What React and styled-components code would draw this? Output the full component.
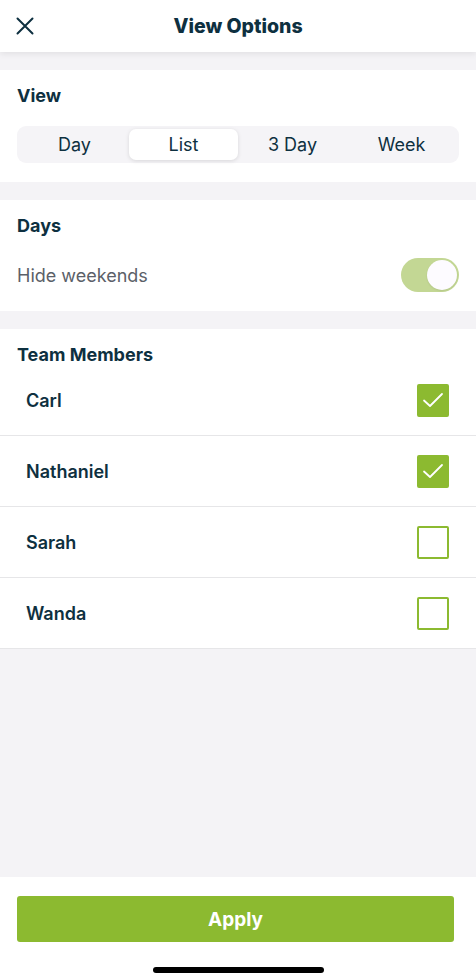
import React, { useState } from 'react';
import styled, { createGlobalStyle } from 'styled-components';

const GlobalStyle = createGlobalStyle`
    * { box-sizing: border-box; }
    html, body {
        margin: 0;
        padding: 0;
        background: #f4f3f6;
        font-family: Inter, "Noto Sans", sans-serif;
        color: #0e3040;
    }
`;

const Page = styled.div`
    width: 476px;
    height: 980px;
    display: flex;
    flex-direction: column;
    background: #f4f3f6;
`;

const Header = styled.header`
    height: 52px;
    background: #fff;
    display: grid;
    grid-template-columns: 52px 1fr 52px;
    align-items: center;
    box-shadow: 0 2px 6px rgba(0, 0, 0, 0.08);
    position: relative;
    z-index: 1;
`;

const CloseButton = styled.button`
    border: 0;
    background: none;
    padding: 0 0 0 16px;
    height: 52px;
    display: flex;
    align-items: center;
    cursor: pointer;
`;

const Title = styled.h1`
    margin: 0;
    text-align: center;
    font-size: 19.5px;
    font-weight: 800;
    color: #0e3040;
`;

const Body = styled.main`
    flex: 1;
    display: flex;
    flex-direction: column;
    gap: 18px;
    padding-top: 18px;
`;

const Section = styled.section`
    background: #fff;
    padding: ${p => p.$padding || '16px 17px 19px'};
`;

const SectionTitle = styled.h2`
    margin: 0;
    padding-left: ${p => p.$inset || 0}px;
    font-size: 18px;
    font-weight: 700;
    color: #0e3040;
    line-height: 20px;
`;

const Segmented = styled.div`
    margin-top: 20px;
    background: #f5f4f7;
    border-radius: 9px;
    padding: 3px;
    display: grid;
    grid-template-columns: repeat(4, 1fr);
    height: 37px;
`;

const Segment = styled.button`
    border: 0;
    font-family: inherit;
    font-size: 18px;
    color: #0e3040;
    border-radius: 7px;
    background: ${p => (p.$active ? '#fff' : 'transparent')};
    box-shadow: ${p => (p.$active ? '0 1px 4px rgba(0,0,0,0.12)' : 'none')};
    cursor: pointer;
    padding: 0;
`;

const ToggleRow = styled.div`
    margin-top: 22px;
    display: flex;
    align-items: center;
    justify-content: space-between;
`;

const ToggleLabel = styled.span`
    font-size: 18px;
    color: #5b6068;
`;

const Toggle = styled.button`
    width: 58px;
    height: 34px;
    border-radius: 17px;
    border: 0;
    padding: 2px;
    background: ${p => (p.$on ? '#c3d794' : '#e3e3e6')};
    display: flex;
    justify-content: ${p => (p.$on ? 'flex-end' : 'flex-start')};
    cursor: pointer;
`;

const Knob = styled.span`
    width: 30px;
    height: 30px;
    border-radius: 50%;
    background: #fdfbff;
    box-shadow: 0 1px 2px rgba(0, 0, 0, 0.08);
`;

const MemberList = styled.ul`
    list-style: none;
    margin: 0;
    padding: 0;
`;

const MemberRow = styled.li`
    height: 71px;
    display: flex;
    align-items: center;
    justify-content: space-between;
    padding: 0 27px 0 26px;
    border-bottom: 1px solid #e6e6e8;
`;

const MemberName = styled.span`
    font-size: 18px;
    font-weight: 600;
    color: #0e3040;
`;

const Checkbox = styled.button`
    width: 32px;
    height: 33px;
    border-radius: 2px;
    padding: 0;
    cursor: pointer;
    display: flex;
    align-items: center;
    justify-content: center;
    border: 2px solid #8cba30;
    background: ${p => (p.$checked ? '#8cba30' : '#fff')};
`;

const Footer = styled.footer`
    background: #fff;
    height: 103px;
    padding: 19px 22px 0 17px;
    display: flex;
    flex-direction: column;
    align-items: center;
`;

const ApplyButton = styled.button`
    width: 100%;
    height: 46px;
    border: 0;
    border-radius: 3px;
    background: #8cba30;
    color: #fff;
    font-family: inherit;
    font-size: 19px;
    font-weight: 700;
    cursor: pointer;
`;

const HomeIndicator = styled.div`
    margin-top: 25px;
    margin-left: 5px;
    width: 171px;
    height: 6px;
    border-radius: 3px;
    background: #000;
`;

const CloseIcon = () => (
    <svg width="18" height="18" viewBox="0 0 18 18" fill="none">
        <path d="M1.5 1.5L16.5 16.5M16.5 1.5L1.5 16.5" stroke="#0e3040" strokeWidth="2" strokeLinecap="round" />
    </svg>
);

const CheckIcon = () => (
    <svg width="22" height="16" viewBox="0 0 22 16" fill="none">
        <path d="M2 8.5L8 14L20 2" stroke="#fff" strokeWidth="1.8" strokeLinecap="round" strokeLinejoin="round" />
    </svg>
);

const views = ['Day', 'List', '3 Day', 'Week'];

const initialMembers = [
    { name: 'Carl', checked: true },
    { name: 'Nathaniel', checked: true },
    { name: 'Sarah', checked: false },
    { name: 'Wanda', checked: false },
];

const App = () => {
    const [view, setView] = useState('List');
    const [hideWeekends, setHideWeekends] = useState(true);
    const [members, setMembers] = useState(initialMembers);

    const toggleMember = name =>
        setMembers(list => list.map(m => (m.name === name ? { ...m, checked: !m.checked } : m)));

    return (
        <Page>
            <GlobalStyle />
            <Header>
                <CloseButton aria-label="Close">
                    <CloseIcon />
                </CloseButton>
                <Title>View Options</Title>
                <span />
            </Header>
            <Body>
                <Section>
                    <SectionTitle>View</SectionTitle>
                    <Segmented>
                        {views.map(v => (
                            <Segment key={v} $active={v === view} onClick={() => setView(v)}>
                                {v}
                            </Segment>
                        ))}
                    </Segmented>
                </Section>
                <Section $padding="16px 17px 19px">
                    <SectionTitle>Days</SectionTitle>
                    <ToggleRow>
                        <ToggleLabel>Hide weekends</ToggleLabel>
                        <Toggle $on={hideWeekends} onClick={() => setHideWeekends(h => !h)}>
                            <Knob />
                        </Toggle>
                    </ToggleRow>
                </Section>
                <Section $padding="16px 0 0">
                    <SectionTitle $inset={17}>Team Members</SectionTitle>
                    <MemberList>
                        {members.map(m => (
                            <MemberRow key={m.name}>
                                <MemberName>{m.name}</MemberName>
                                <Checkbox $checked={m.checked} onClick={() => toggleMember(m.name)}>
                                    {m.checked && <CheckIcon />}
                                </Checkbox>
                            </MemberRow>
                        ))}
                    </MemberList>
                </Section>
            </Body>
            <Footer>
                <ApplyButton>Apply</ApplyButton>
                <HomeIndicator />
            </Footer>
        </Page>
    );
};

export default App;
